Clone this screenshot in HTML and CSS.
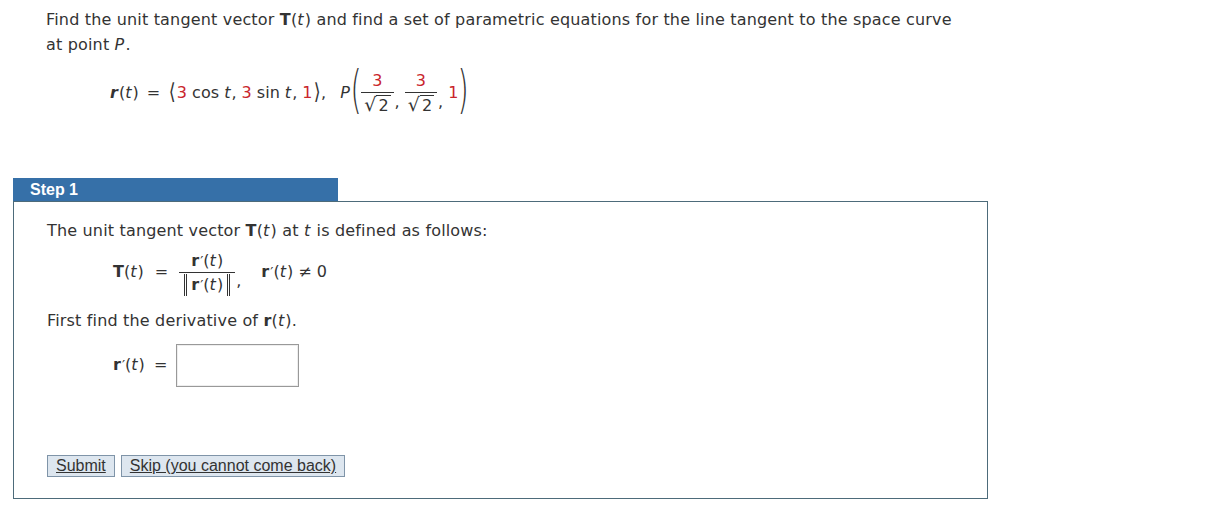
FILE: index.html
```html
<!DOCTYPE html>
<html lang="en">
<head>
    <meta charset="UTF-8">
    <title>Unit Tangent Vector</title>
    <link rel="stylesheet" href="styles.css">
</head>
<body>
    <div class="question">
        <p class="prompt">Find the unit tangent vector <b>T</b>(<i>t</i>) and find a set of parametric equations for the line tangent to the space curve at point <i>P</i>.</p>

        <div class="given">
            <b><i>r</i></b>(<i>t</i>) <span class="eq">=</span> <span class="angle">&#10216;</span><span class="red">3</span> cos <i>t</i>, <span class="red">3</span> sin <i>t</i>, <span class="red">1</span><span class="angle">&#10217;</span>,&nbsp;
            <i class="pt">P</i><span class="big-paren">(</span><span class="frac"><span class="num red">3</span><span class="den"><span class="root">&radic;</span><span class="radicand">2</span></span></span><span class="comma">,</span> <span class="frac"><span class="num red">3</span><span class="den"><span class="root">&radic;</span><span class="radicand">2</span></span></span><span class="comma">,</span> <span class="red">1</span><span class="big-paren">)</span>
        </div>
    </div>

    <div class="step">
        <div class="step-head">Step 1</div>
        <div class="step-body">
            <p>The unit tangent vector <b>T</b>(<i>t</i>) at <i>t</i> is defined as follows:</p>

            <div class="definition">
                <b>T</b>(<i>t</i>) <span class="eq">=</span> <span class="frac"><span class="num"><b>r</b><span class="prime">&prime;</span>(<i>t</i>)</span><span class="den"><span class="norm"><b>r</b><span class="prime">&prime;</span>(<i>t</i>)</span></span></span><span class="comma">,</span>
                <span class="cond"><b>r</b><span class="prime">&prime;</span>(<i>t</i>) &ne; 0</span>
            </div>

            <p class="step-text">First find the derivative of <b>r</b>(<i>t</i>).</p>

            <div class="answer-row">
                <b>r</b><span class="prime">&prime;</span>(<i>t</i>) <span class="eq">=</span>
                <input type="text" class="answer-input">
            </div>

            <div class="actions">
                <button class="btn">Submit</button>
                <button class="btn">Skip (you cannot come back)</button>
            </div>
        </div>
    </div>
</body>
</html>
```

FILE: styles.css
```css
body {
    margin: 0;
    padding: 7px 0 0 13px;
    font-family: "DejaVu Sans", Verdana, sans-serif;
    font-size: 16px;
    color: #333;
    background: #fff;
}
p {
    margin: 0;
    line-height: 25px;
    letter-spacing: 0.17px;
}
i {
    padding-right: 1px;
}
.red {
    color: #c9252c;
}
.question {
    padding-left: 33px;
    width: 925px;
}
.eq {
    margin: 0 3px;
}
.given {
    margin: 6px 0 0 64px;
    height: 54px;
    line-height: 54px;
    white-space: nowrap;
}
.angle {
    display: inline-block;
    font-size: 22px;
    transform: scaleX(0.8);
    vertical-align: -1px;
}
.pt {
    margin-left: 4px;
}
.big-paren {
    display: inline-block;
    font-size: 52px;
    font-weight: 200;
    line-height: 52px;
    vertical-align: -9px;
    transform: scaleX(0.55);
    margin: 0 -5px;
}
.frac {
    display: inline-flex;
    flex-direction: column;
    align-items: center;
    vertical-align: middle;
    line-height: 22px;
}
.frac .num {
    align-self: stretch;
    text-align: center;
    border-bottom: 1px solid #333;
}
.frac .den {
    padding: 0 2px;
}
.given .frac .den {
    padding: 0 3px;
}
.root {
    font-size: 19px;
}
.radicand {
    border-top: 1px solid #333;
    padding: 0 2px;
}
.comma {
    position: relative;
    top: 9px;
    margin-left: 1px;
}
.prime {
    margin-left: 1px;
    font-size: 14px;
}
.step {
    margin-top: 61px;
    width: 975px;
}
.step-head {
    width: 308px;
    height: 23px;
    padding-left: 17px;
    background: #3670a8;
    color: #fff;
    font-family: "Liberation Sans", Arial, sans-serif;
    font-weight: bold;
    font-size: 16px;
    line-height: 23px;
}
.step-body {
    border: 1px solid #4d6b7a;
    height: 280px;
    padding: 16px 0 0 33px;
}
.definition {
    margin: 7px 0 0 66px;
    height: 44px;
    line-height: 44px;
    white-space: nowrap;
}
.definition .eq {
    margin: 0 6px;
}
.definition .frac {
    line-height: 21px;
}
.definition .num {
    padding: 0 12px;
}
.norm {
    display: inline-block;
    padding: 0 4px;
    margin: 1px 0 -2px;
    line-height: 21px;
    border-left: 3px double #333;
    border-right: 3px double #333;
}
.definition .comma {
    margin-right: 15px;
}
.step-text {
    margin-top: 14px;
}
.answer-row {
    margin: 10px 0 0 66px;
    height: 43px;
    line-height: 43px;
    white-space: nowrap;
}
.answer-row .eq {
    margin: 0 4px;
}
.answer-input {
    width: 121px;
    height: 41px;
    margin: 0;
    padding: 0;
    border: 1px solid #999;
    box-shadow: inset 0 0 0 1px #eee;
    vertical-align: middle;
}
.actions {
    display: flex;
    gap: 6px;
    margin-top: 69px;
}
.btn {
    height: 22px;
    padding: 0 8px;
    background: #dde6ef;
    border: 1px solid #7f94a8;
    font-family: "Liberation Sans", Arial, sans-serif;
    font-size: 16px;
    line-height: 20px;
    color: #333;
    text-decoration: underline;
    cursor: pointer;
}
```
